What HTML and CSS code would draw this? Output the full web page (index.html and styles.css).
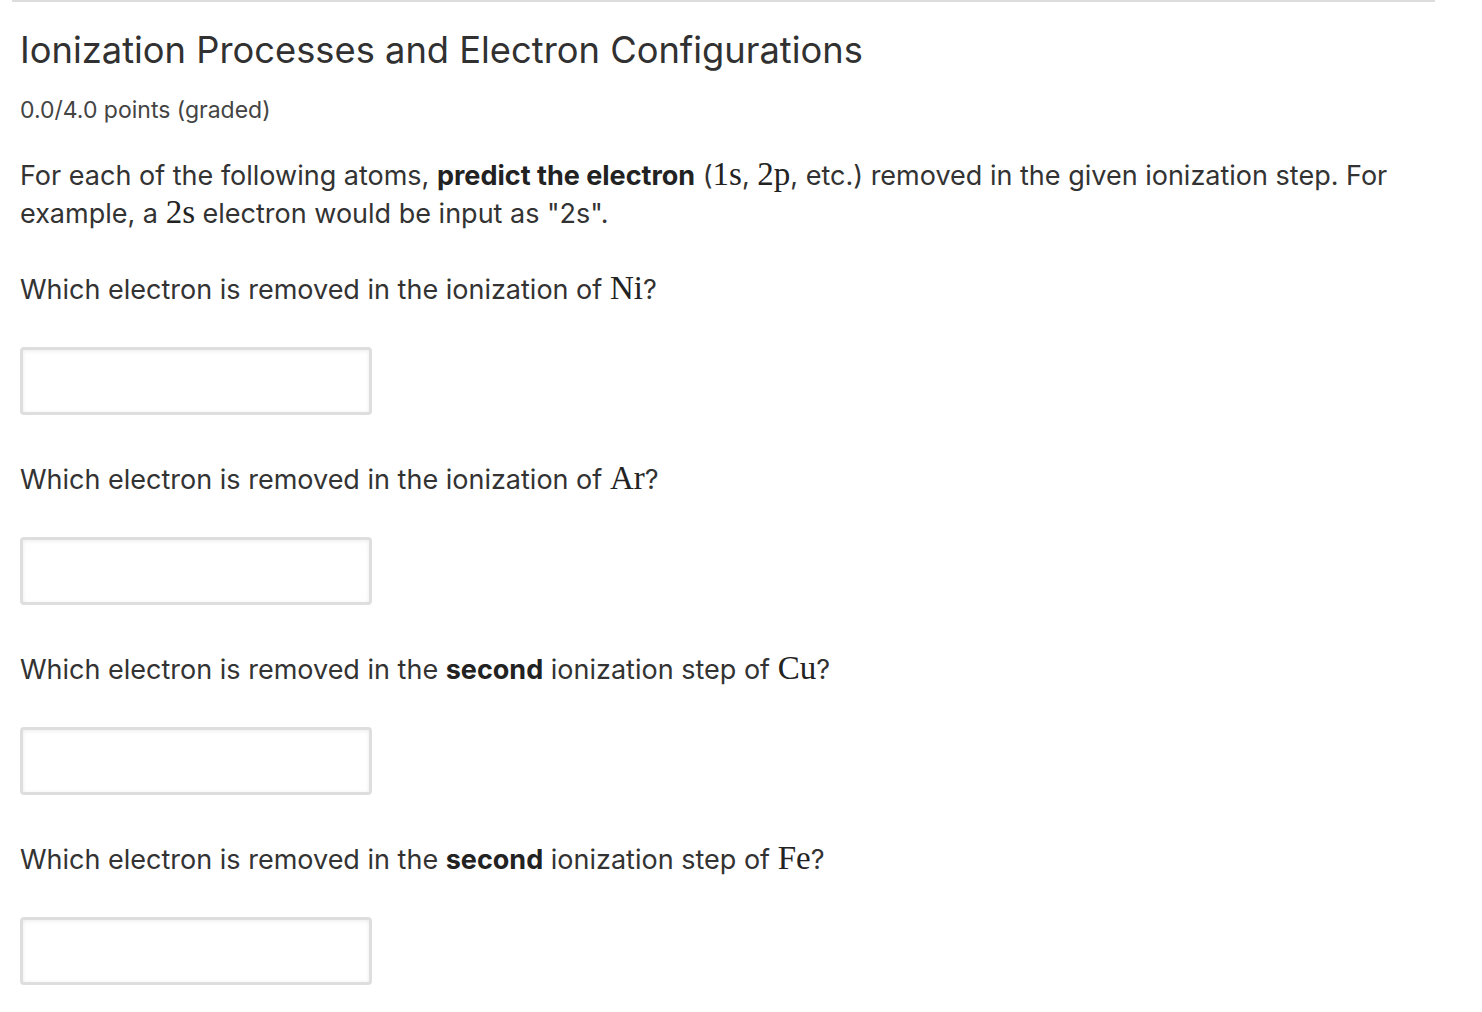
FILE: index.html
```html
<!DOCTYPE html>
<html>
<head>
<meta charset="utf-8">
<link rel="stylesheet" href="styles.css">
</head>
<body>
<div class="problem">
  <h3 class="title">Ionization Processes and Electron Configurations</h3>
  <div class="points">0.0/4.0 points (graded)</div>
  <p class="intro">For each of the following atoms, <strong>predict the electron</strong> (<span class="m">1s</span>, <span class="m">2p</span>, etc.) removed in the given ionization step. For example, a <span class="m">2s</span> electron would be input as "2s".</p>

  <div class="q">
    <p class="qtext">Which electron is removed in the ionization of <span class="m">Ni</span>?</p>
    <input class="answer" type="text">
  </div>
  <div class="q">
    <p class="qtext">Which electron is removed in the ionization of <span class="m">Ar</span>?</p>
    <input class="answer" type="text">
  </div>
  <div class="q">
    <p class="qtext">Which electron is removed in the <strong>second</strong> ionization step of <span class="m">Cu</span>?</p>
    <input class="answer" type="text">
  </div>
  <div class="q">
    <p class="qtext">Which electron is removed in the <strong>second</strong> ionization step of <span class="m">Fe</span>?</p>
    <input class="answer" type="text">
  </div>
</div>
</body>
</html>
```

FILE: styles.css
```css
html, body {
  margin: 0;
  padding: 0;
  background: #fff;
}
body {
  font-family: Inter, "Noto Sans", sans-serif;
  color: #333;
}
.problem {
  margin: 0 47px 0 12px;
  border-top: 2px solid #ddd;
  padding: 0 8px;
}
.title {
  margin: 28px 0 0;
  font-size: 36.3px;
  font-weight: 400;
  line-height: 40px;
  color: #313131;
}
.points {
  margin-top: 26px;
  font-size: 23px;
  line-height: 28px;
  color: #444;
}
.intro {
  margin: 33px 0 0;
  font-size: 27px;
  line-height: 38px;
}
.intro strong, .qtext strong {
  font-weight: 700;
  color: #222;
}
.m {
  font-family: "Liberation Serif", "DejaVu Serif", serif;
  font-size: 33px;
  line-height: 1;
  color: #222;
}
.q {
  margin-top: 38px;
}
.q + .q {
  margin-top: 46px;
}
.qtext {
  margin: 0;
  font-size: 27px;
  line-height: 38px;
}
.answer {
  display: block;
  margin-top: 38px;
  width: 352px;
  height: 68px;
  box-sizing: border-box;
  border: 3px solid #dedede;
  border-radius: 4px;
  box-shadow: inset 0 1px 4px rgba(0,0,0,0.08);
  background: #fff;
  padding: 0 10px;
  font-size: 24px;
}
```
